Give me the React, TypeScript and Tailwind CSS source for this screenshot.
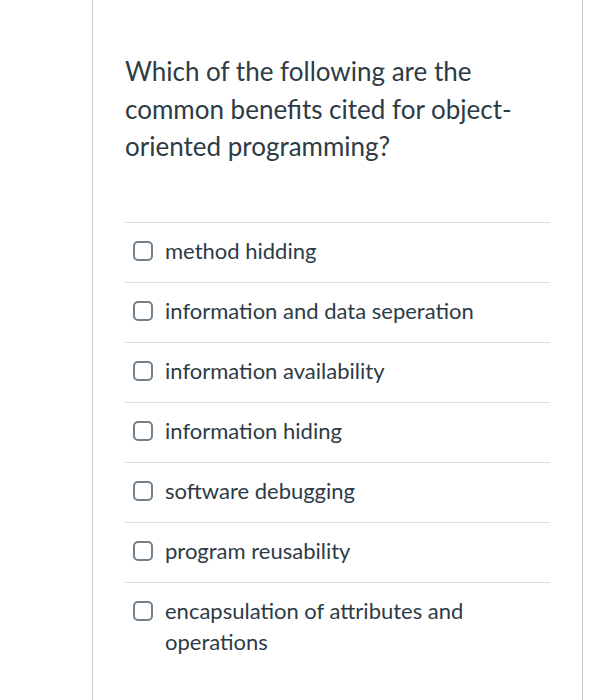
const OPTIONS = [
  "method hidding",
  "information and data seperation",
  "information availability",
  "information hiding",
  "software debugging",
  "program reusability",
  "encapsulation of attributes and operations",
];

export default function App() {
  return (
    <div className="w-[592px] h-[700px] bg-white overflow-hidden font-['Lato','Noto_Sans',sans-serif]">
      <div className="ml-[92px] w-[491px] h-[700px] border-x border-[#c7cdd1] px-8 pt-[53px]">
        <p className="text-[26px] leading-[37.5px] text-[#2d3b45]">
          Which of the following are the common benefits cited for object-oriented programming?
        </p>
        <div className="mt-[56px]">
          {OPTIONS.map((o) => (
            <label key={o} className="flex items-start gap-3 border-t border-[#dcdfe2] pl-2 pt-[12px] pb-[16px] text-[22px] leading-[31px] text-[#2d3b45]">
              <span className="mt-[6px] w-5 h-5 shrink-0 rounded-[5px] border-2 border-[#73818b] bg-white" />
              <span>{o}</span>
            </label>
          ))}
        </div>
      </div>
    </div>
  );
}
